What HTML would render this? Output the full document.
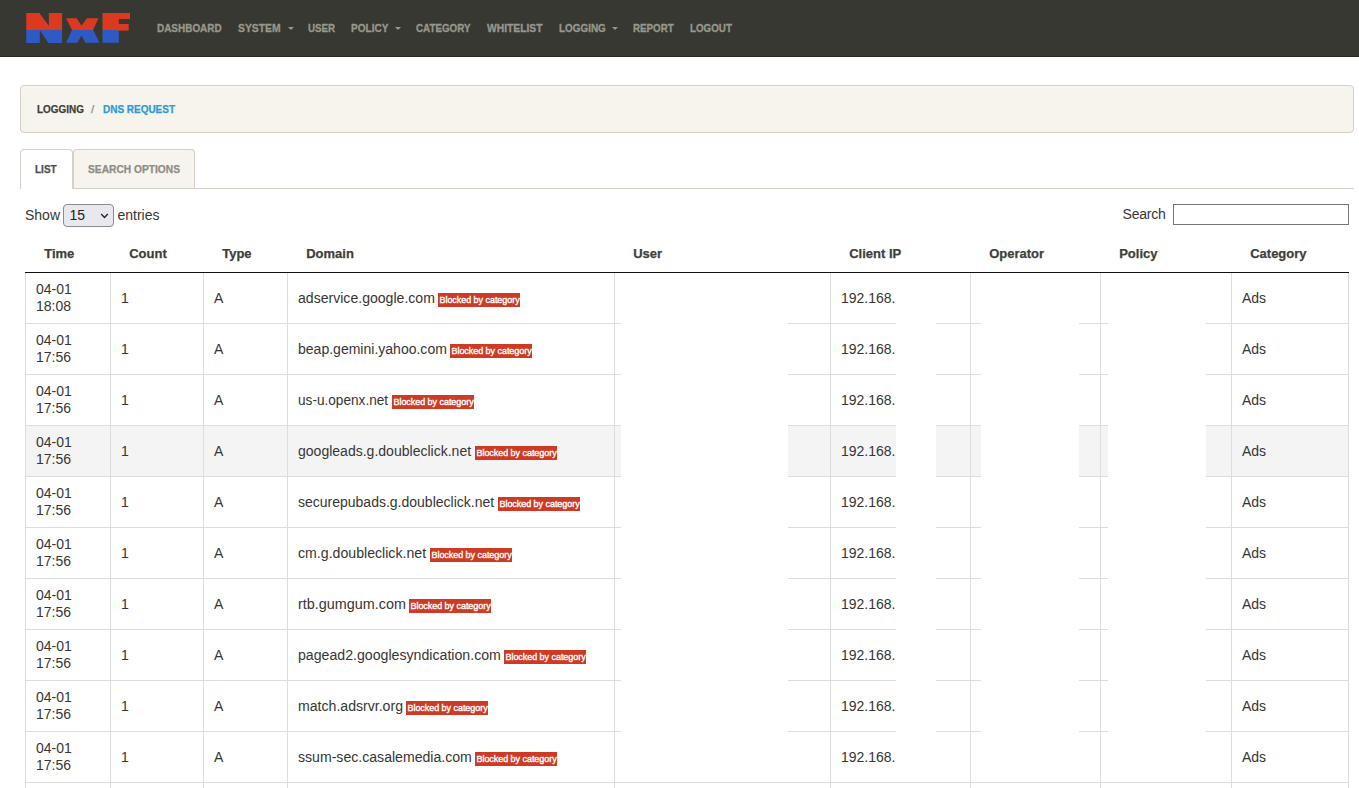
<!DOCTYPE html><html><head><meta charset="utf-8"><style>
*{box-sizing:border-box;margin:0;padding:0}
html,body{width:1359px;height:788px;overflow:hidden;background:#fff}
body{font-family:"Liberation Sans",sans-serif;color:#3e3f3a;position:relative}
.abs{position:absolute}
.nav{position:absolute;left:0;top:0;width:1359px;height:57px;background:#383833;border-bottom:1px solid #2b2b27}
.ni{position:absolute;top:21.8px;font-size:10.5px;font-weight:bold;color:#98978b;transform-origin:0 0;line-height:12px;white-space:nowrap;-webkit-text-stroke:0.3px #98978b}
.caret{position:absolute;top:26.8px;width:0;height:0;border-left:3px solid transparent;border-right:3px solid transparent;border-top:3px solid #98978b}
.bc{position:absolute;left:20px;top:85px;width:1334px;height:48px;background:#f7f4ee;border:1px solid #d5d1c8;border-radius:4px}
.bct{position:absolute;top:103px;font-size:10.5px;font-weight:bold;transform-origin:0 0;line-height:12px;white-space:nowrap;-webkit-text-stroke:0.25px currentColor}
.tabline{position:absolute;left:20px;top:188px;width:1334px;height:1px;background:#d5d1c8}
.tab{position:absolute;top:149px;height:40px;border:1px solid #d5d1c8;border-bottom:none;border-radius:4px 4px 0 0}
.tt{position:absolute;top:163px;font-size:10.5px;font-weight:bold;transform-origin:0 0;line-height:12px;white-space:nowrap;-webkit-text-stroke:0.25px currentColor}
.t14{position:absolute;font-size:14px;line-height:17px;white-space:nowrap;color:#363636}
.th{position:absolute;top:245.5px;font-size:13px;font-weight:bold;line-height:16px;white-space:nowrap;color:#3e3f3a;-webkit-text-stroke:0.25px #3e3f3a}
.hl{position:absolute;left:25px;top:272px;width:1324px;height:1px;background:#111}
.vl{position:absolute;width:1px;background:#ddd}
.hrow{position:absolute;height:1px;background:#ddd}
.badge{position:absolute;background:#cf3a24;color:#fff;font-size:9px;font-weight:normal;letter-spacing:-0.05px;line-height:14px;height:14px;padding:0 0 0 1.5px;width:82px;overflow:hidden;white-space:nowrap;-webkit-text-stroke:0.35px #fff;}
.wr{position:absolute;background:#fff}
</style></head><body>
<div class="nav"></div>
<svg class="abs" style="left:0;top:0" width="140" height="56" viewBox="0 0 140 56">
<defs><clipPath id="top"><rect x="0" y="0" width="140" height="30"/></clipPath><clipPath id="bot"><rect x="0" y="30" width="140" height="26"/></clipPath>
<g id="lg"><path d="M26.3 13.1H39.3L48.9 25.8V13.1H62.1V43H48.4L39.8 30.3V43H26.3Z"/>
<path d="M66.1 18.2H76.6L81.5 25.7L87 18.2H98.4L93.1 30L99.5 42.8H85.4L81.5 35.6L77.4 42.8H66.1L72 30Z"/>
<path d="M102.5 13H130V19H118.8V42.8H102.5Z"/></g></defs>
<g clip-path="url(#top)" fill="#dc3a1f"><use href="#lg"/></g>
<g clip-path="url(#bot)" fill="#2f5ac6"><use href="#lg"/></g>
<rect x="118" y="24" width="10.7" height="6.6" fill="#dc3a1f"/>
</svg>
<div class="ni" style="left:157.44px;transform:scaleX(0.9476);">DASHBOARD</div>
<div class="ni" style="left:238.01px;transform:scaleX(0.9873);">SYSTEM</div>
<div class="caret" style="left:287.5px"></div>
<div class="ni" style="left:307.95px;transform:scaleX(0.9310);">USER</div>
<div class="ni" style="left:350.83px;transform:scaleX(0.9575);">POLICY</div>
<div class="caret" style="left:395px"></div>
<div class="ni" style="left:416.05px;transform:scaleX(0.9334);">CATEGORY</div>
<div class="ni" style="left:487.31px;transform:scaleX(0.9807);">WHITELIST</div>
<div class="ni" style="left:559.04px;transform:scaleX(0.9428);">LOGGING</div>
<div class="caret" style="left:612px"></div>
<div class="ni" style="left:632.95px;transform:scaleX(0.9293);">REPORT</div>
<div class="ni" style="left:689.85px;transform:scaleX(0.9329);">LOGOUT</div>
<div class="bc"></div>
<div class="bct" style="left:36.64px;transform:scaleX(0.9449);color:#3e3f3a">LOGGING</div>
<div class="bct" style="left:91px;color:#8e8c84;font-weight:normal;font-size:11.5px;top:103px">/</div>
<div class="bct" style="left:103.34px;transform:scaleX(0.9489);color:#2d9bd4">DNS REQUEST</div>
<div class="tabline"></div>
<div class="tab" style="left:20px;width:53px;background:#fff"></div>
<div class="tab" style="left:73px;width:122px;background:#f7f4ee;height:39px"></div>
<div class="tt" style="left:35.33px;transform:scaleX(0.9528);color:#495057">LIST</div>
<div class="tt" style="left:88.12px;transform:scaleX(0.9732);color:#8e8c84">SEARCH OPTIONS</div>
<div class="t14" style="left:25px;top:207px">Show</div>
<div class="abs" style="left:63px;top:204px;width:51px;height:23px;background:#e9e8ef;border:1px solid #8a8a8f;border-radius:4px"></div>
<div class="t14" style="left:69.5px;top:207px;color:#222">15</div>
<svg class="abs" style="left:100px;top:212px" width="10" height="8" viewBox="0 0 10 8"><path d="M1.2 2L4.5 5.5L7.8 2" fill="none" stroke="#222" stroke-width="1.25"/></svg>
<div class="t14" style="left:117.5px;top:207px">entries</div>
<div class="t14" style="left:1122.5px;top:206px;letter-spacing:-0.2px">Search</div>
<div class="abs" style="left:1173px;top:204px;width:176px;height:21px;border:1px solid #767676;background:#fff"></div>
<div class="th" style="left:44.2px">Time</div>
<div class="th" style="left:129.2px">Count</div>
<div class="th" style="left:222.2px">Type</div>
<div class="th" style="left:306.2px">Domain</div>
<div class="th" style="left:633.2px">User</div>
<div class="th" style="left:849.2px">Client IP</div>
<div class="th" style="left:989.2px">Operator</div>
<div class="th" style="left:1119.2px">Policy</div>
<div class="th" style="left:1250.2px">Category</div>
<div class="t14" style="left:36px;top:281px">04-01<br>18:08</div>
<div class="t14" style="left:121px;top:289.5px">1</div>
<div class="t14" style="left:214px;top:289.5px">A</div>
<div class="t14" style="left:298px;top:289.5px;transform:scaleX(1.0050);transform-origin:0 0">adservice.google.com</div>
<div class="badge" style="left:438px;top:293px">Blocked by category</div>
<div class="t14" style="left:841px;top:289.5px">192.168.</div>
<div class="t14" style="left:1242px;top:289.5px">Ads</div>
<div class="hrow" style="left:25px;top:323px;width:1324px"></div>
<div class="t14" style="left:36px;top:332px">04-01<br>17:56</div>
<div class="t14" style="left:121px;top:340.5px">1</div>
<div class="t14" style="left:214px;top:340.5px">A</div>
<div class="t14" style="left:298px;top:340.5px;transform:scaleX(1.0014);transform-origin:0 0">beap.gemini.yahoo.com</div>
<div class="badge" style="left:450px;top:344px">Blocked by category</div>
<div class="t14" style="left:841px;top:340.5px">192.168.</div>
<div class="t14" style="left:1242px;top:340.5px">Ads</div>
<div class="hrow" style="left:25px;top:374px;width:1324px"></div>
<div class="t14" style="left:36px;top:383px">04-01<br>17:56</div>
<div class="t14" style="left:121px;top:391.5px">1</div>
<div class="t14" style="left:214px;top:391.5px">A</div>
<div class="t14" style="left:298px;top:391.5px;transform:scaleX(0.9727);transform-origin:0 0">us-u.openx.net</div>
<div class="badge" style="left:392px;top:395px">Blocked by category</div>
<div class="t14" style="left:841px;top:391.5px">192.168.</div>
<div class="t14" style="left:1242px;top:391.5px">Ads</div>
<div class="hrow" style="left:25px;top:425px;width:1324px"></div>
<div class="abs" style="left:25px;top:426px;width:1324px;height:50px;background:#f4f4f4"></div>
<div class="t14" style="left:36px;top:434px">04-01<br>17:56</div>
<div class="t14" style="left:121px;top:442.5px">1</div>
<div class="t14" style="left:214px;top:442.5px">A</div>
<div class="t14" style="left:298px;top:442.5px;transform:scaleX(1.0017);transform-origin:0 0">googleads.g.doubleclick.net</div>
<div class="badge" style="left:475px;top:446px">Blocked by category</div>
<div class="t14" style="left:841px;top:442.5px">192.168.</div>
<div class="t14" style="left:1242px;top:442.5px">Ads</div>
<div class="hrow" style="left:25px;top:476px;width:1324px"></div>
<div class="t14" style="left:36px;top:485px">04-01<br>17:56</div>
<div class="t14" style="left:121px;top:493.5px">1</div>
<div class="t14" style="left:214px;top:493.5px">A</div>
<div class="t14" style="left:298px;top:493.5px;transform:scaleX(0.9998);transform-origin:0 0">securepubads.g.doubleclick.net</div>
<div class="badge" style="left:498px;top:497px">Blocked by category</div>
<div class="t14" style="left:841px;top:493.5px">192.168.</div>
<div class="t14" style="left:1242px;top:493.5px">Ads</div>
<div class="hrow" style="left:25px;top:527px;width:1324px"></div>
<div class="t14" style="left:36px;top:536px">04-01<br>17:56</div>
<div class="t14" style="left:121px;top:544.5px">1</div>
<div class="t14" style="left:214px;top:544.5px">A</div>
<div class="t14" style="left:298px;top:544.5px;transform:scaleX(1.0098);transform-origin:0 0">cm.g.doubleclick.net</div>
<div class="badge" style="left:430px;top:548px">Blocked by category</div>
<div class="t14" style="left:841px;top:544.5px">192.168.</div>
<div class="t14" style="left:1242px;top:544.5px">Ads</div>
<div class="hrow" style="left:25px;top:578px;width:1324px"></div>
<div class="t14" style="left:36px;top:587px">04-01<br>17:56</div>
<div class="t14" style="left:121px;top:595.5px">1</div>
<div class="t14" style="left:214px;top:595.5px">A</div>
<div class="t14" style="left:298px;top:595.5px;transform:scaleX(1.0271);transform-origin:0 0">rtb.gumgum.com</div>
<div class="badge" style="left:409px;top:599px">Blocked by category</div>
<div class="t14" style="left:841px;top:595.5px">192.168.</div>
<div class="t14" style="left:1242px;top:595.5px">Ads</div>
<div class="hrow" style="left:25px;top:629px;width:1324px"></div>
<div class="t14" style="left:36px;top:638px">04-01<br>17:56</div>
<div class="t14" style="left:121px;top:646.5px">1</div>
<div class="t14" style="left:214px;top:646.5px">A</div>
<div class="t14" style="left:298px;top:646.5px;transform:scaleX(1.0102);transform-origin:0 0">pagead2.googlesyndication.com</div>
<div class="badge" style="left:504px;top:650px">Blocked by category</div>
<div class="t14" style="left:841px;top:646.5px">192.168.</div>
<div class="t14" style="left:1242px;top:646.5px">Ads</div>
<div class="hrow" style="left:25px;top:680px;width:1324px"></div>
<div class="t14" style="left:36px;top:689px">04-01<br>17:56</div>
<div class="t14" style="left:121px;top:697.5px">1</div>
<div class="t14" style="left:214px;top:697.5px">A</div>
<div class="t14" style="left:298px;top:697.5px;transform:scaleX(1.0070);transform-origin:0 0">match.adsrvr.org</div>
<div class="badge" style="left:406px;top:701px">Blocked by category</div>
<div class="t14" style="left:841px;top:697.5px">192.168.</div>
<div class="t14" style="left:1242px;top:697.5px">Ads</div>
<div class="hrow" style="left:25px;top:731px;width:1324px"></div>
<div class="t14" style="left:36px;top:740px">04-01<br>17:56</div>
<div class="t14" style="left:121px;top:748.5px">1</div>
<div class="t14" style="left:214px;top:748.5px">A</div>
<div class="t14" style="left:298px;top:748.5px;transform:scaleX(1.0066);transform-origin:0 0">ssum-sec.casalemedia.com</div>
<div class="badge" style="left:475px;top:752px">Blocked by category</div>
<div class="t14" style="left:841px;top:748.5px">192.168.</div>
<div class="t14" style="left:1242px;top:748.5px">Ads</div>
<div class="hrow" style="left:25px;top:782px;width:1324px"></div>
<div class="t14" style="left:36px;top:791px">04-01<br>17:56</div>
<div class="t14" style="left:121px;top:799.5px">1</div>
<div class="t14" style="left:214px;top:799.5px">A</div>
<div class="t14" style="left:298px;top:799.5px;transform:scaleX(1.0000);transform-origin:0 0">ads.example.com</div>
<div class="t14" style="left:841px;top:799.5px">192.168.</div>
<div class="t14" style="left:1242px;top:799.5px">Ads</div>
<div class="hrow" style="left:25px;top:833px;width:1324px"></div>
<div class="vl" style="left:25px;top:273px;height:520px"></div>
<div class="vl" style="left:110px;top:273px;height:520px"></div>
<div class="vl" style="left:203px;top:273px;height:520px"></div>
<div class="vl" style="left:287px;top:273px;height:520px"></div>
<div class="vl" style="left:614px;top:273px;height:520px"></div>
<div class="vl" style="left:830px;top:273px;height:520px"></div>
<div class="vl" style="left:970px;top:273px;height:520px"></div>
<div class="vl" style="left:1100px;top:273px;height:520px"></div>
<div class="vl" style="left:1231px;top:273px;height:520px"></div>
<div class="vl" style="left:1348px;top:273px;height:520px"></div>
<div class="wr" style="left:621px;top:273px;width:167px;height:509px"></div>
<div class="wr" style="left:896px;top:273px;width:40px;height:509px"></div>
<div class="wr" style="left:981px;top:273px;width:98px;height:509px"></div>
<div class="wr" style="left:1108px;top:273px;width:98px;height:509px"></div>
<div class="hl"></div>
</body></html>
